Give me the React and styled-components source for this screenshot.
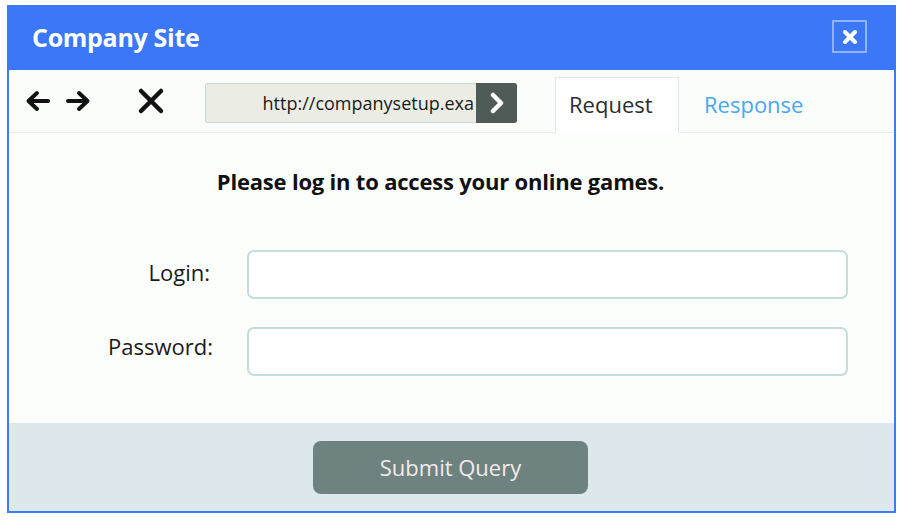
import React from 'react';
import styled, { createGlobalStyle } from 'styled-components';

const Global = createGlobalStyle`
    body {
        margin: 0;
        background: #ffffff;
        font-family: "Open Sans", "Noto Sans", sans-serif;
    }
`;

const Window = styled.div`
    margin: 5px 0 0 7px;
    width: 889px;
    height: 508px;
    box-sizing: border-box;
    border: 2px solid #3a7cf6;
    border-top: none;
    display: flex;
    flex-direction: column;
    background: #fbfdfb;
`;

const TitleBar = styled.div`
    height: 65px;
    flex: none;
    background: #3b77f7;
    display: flex;
    align-items: center;
    justify-content: space-between;
    padding: 0 29px 2px 25px;
    margin: 0 -2px;
    box-sizing: border-box;
`;

const Title = styled.div`
    color: #ffffff;
    font-weight: 700;
    font-size: 25px;
    letter-spacing: -0.3px;
`;

const CloseBox = styled.div`
    width: 31px;
    height: 29px;
    border: 2px solid #8fb4fb;
    display: flex;
    align-items: center;
    justify-content: center;
`;

const Toolbar = styled.div`
    height: 63px;
    flex: none;
    display: flex;
    align-items: flex-end;
    border-bottom: 1px solid #e2eeea;
    box-sizing: border-box;
`;

const NavGroup = styled.div`
    height: 62px;
    display: flex;
    align-items: center;
    padding-left: 16px;
`;

const NavIcon = styled.svg`
    display: block;
    margin-right: ${p => p.$gap || 0}px;
`;

const UrlField = styled.div`
    width: 312px;
    height: 40px;
    margin: 0 0 9px 40px;
    align-self: flex-end;
    display: flex;
    box-sizing: border-box;
    border: 1px solid #c9dad4;
    background: #ebede4;
    border-radius: 2px;
`;

const UrlText = styled.div`
    flex: 1;
    overflow: hidden;
    display: flex;
    align-items: center;
    justify-content: flex-end;
    padding-right: 2px;
    font-size: 18px;
    color: #1a1a1a;
    white-space: nowrap;
`;

const GoButton = styled.div`
    width: 41px;
    flex: none;
    background: #4e5b57;
    border-radius: 0 3px 3px 0;
    margin: -1px -1px -1px 0;
    display: flex;
    align-items: center;
    justify-content: center;
`;

const Tabs = styled.div`
    display: flex;
    margin-left: 38px;
    align-items: flex-end;
`;

const Tab = styled.div`
    height: 56px;
    margin-bottom: -1px;
    box-sizing: border-box;
    display: flex;
    align-items: center;
    font-size: 22px;
    color: ${p => (p.$active ? '#2b2f2e' : '#4aa7ef')};
    background: ${p => (p.$active ? '#fdfefd' : 'transparent')};
    border: 1px solid ${p => (p.$active ? '#dcece8' : 'transparent')};
    border-bottom-color: ${p => (p.$active ? '#fdfefd' : 'transparent')};
    padding: 0 0 3px ${p => (p.$active ? '13px' : '24px')};
    width: ${p => (p.$active ? '124px' : 'auto')};
`;

const Body = styled.div`
    flex: 1;
    display: flex;
    flex-direction: column;
    background: #fcfefc;
`;

const Heading = styled.div`
    text-align: center;
    font-weight: 700;
    font-size: 22px;
    color: #111;
    margin-top: 33px;
    padding-right: 22px;
    letter-spacing: -0.2px;
`;

const Form = styled.div`
    display: grid;
    grid-template-columns: 204px 601px;
    column-gap: 34px;
    row-gap: 28px;
    margin-top: 54px;
    align-items: center;
`;

const Label = styled.div`
    text-align: right;
    font-size: 22px;
    color: #1a1a1a;
    padding-bottom: ${p => p.$shift || 0}px;
    padding-right: ${p => p.$inset || 0}px;
`;

const Input = styled.div`
    height: 49px;
    box-sizing: border-box;
    border: 2px solid #c3dcdc;
    border-radius: 7px;
    background: #ffffff;
`;

const Footer = styled.div`
    height: 88px;
    flex: none;
    background: #dce8ec;
    display: flex;
    justify-content: center;
    padding-top: 18px;
    box-sizing: border-box;
`;

const SubmitButton = styled.div`
    width: 275px;
    height: 53px;
    border-radius: 8px;
    background: #6e8280;
    color: #f3ebeb;
    font-size: 22px;
    display: flex;
    align-items: center;
    justify-content: center;
    padding-bottom: 2px;
    box-sizing: border-box;
    margin-left: -2px;
`;

const App = () => (
    <>
        <Global />
        <Window>
            <TitleBar>
                <Title>Company Site</Title>
                <CloseBox>
                    <svg width="16" height="16" viewBox="0 0 16 16">
                        <path d="M3 3 L13 13 M13 3 L3 13" stroke="#fff" strokeWidth="4" strokeLinecap="round" />
                    </svg>
                </CloseBox>
            </TitleBar>
            <Toolbar>
                <NavGroup>
                    <NavIcon width="26" height="22" viewBox="0 0 26 22" $gap={14}>
                        <path d="M23 11 H4 M12 3 L3.5 11 L12 19" stroke="#111" strokeWidth="4" fill="none" strokeLinecap="round" strokeLinejoin="round" />
                    </NavIcon>
                    <NavIcon width="26" height="22" viewBox="0 0 26 22" $gap={46}>
                        <path d="M3 11 H22 M14 3 L22.5 11 L14 19" stroke="#111" strokeWidth="4" fill="none" strokeLinecap="round" strokeLinejoin="round" />
                    </NavIcon>
                    <NavIcon width="28" height="28" viewBox="0 0 28 28">
                        <path d="M4 4 L24 24 M24 4 L4 24" stroke="#111" strokeWidth="4.5" strokeLinecap="round" />
                    </NavIcon>
                </NavGroup>
                <UrlField>
                    <UrlText>http://companysetup.exa</UrlText>
                    <GoButton>
                        <svg width="16" height="22" viewBox="0 0 16 22">
                            <path d="M4 3 L12 11 L4 19" stroke="#fff" strokeWidth="4.5" fill="none" strokeLinecap="round" strokeLinejoin="round" />
                        </svg>
                    </GoButton>
                </UrlField>
                <Tabs>
                    <Tab $active>Request</Tab>
                    <Tab>Response</Tab>
                </Tabs>
            </Toolbar>
            <Body>
                <Heading>Please log in to access your online games.</Heading>
                <Form>
                    <Label $shift={6} $inset={3}>Login:</Label>
                    <Input />
                    <Label $shift={12}>Password:</Label>
                    <Input />
                </Form>
            </Body>
            <Footer>
                <SubmitButton>Submit Query</SubmitButton>
            </Footer>
        </Window>
    </>
);

export default App;
